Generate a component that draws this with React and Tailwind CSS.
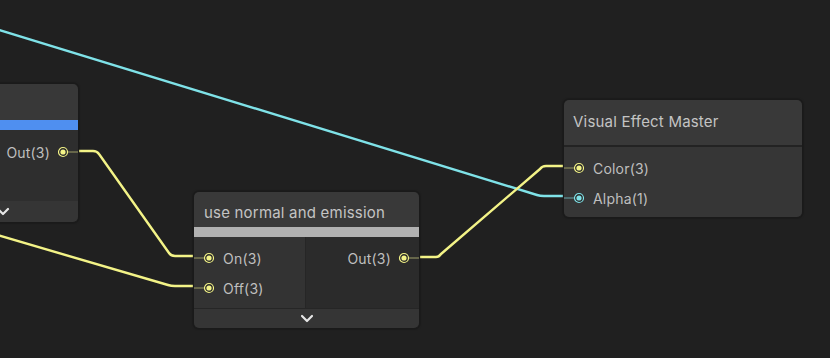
import React from "react";

const YELLOW = "#f3f387";
const CYAN = "#7fe2e8";

const Port = ({ color }) => (
  <svg width="12" height="12" viewBox="0 0 12 12" className="shrink-0">
    <circle cx="6" cy="6" r="4.5" fill="#2a2a2a" stroke={color} strokeWidth="1.2" />
    <circle cx="6" cy="6" r="2.6" fill={color} />
  </svg>
);

const Chevron = () => (
  <svg width="14" height="9" viewBox="0 0 14 9">
    <path d="M2 2 L7 7 L12 2" fill="none" stroke="#e6e6e6" strokeWidth="2.2" strokeLinecap="round" strokeLinejoin="round" />
  </svg>
);

const Edges = () => (
  <svg className="absolute left-0 top-0" width="830" height="358" viewBox="0 0 830 358">
    <g fill="none" strokeWidth="2.4" strokeLinejoin="round">
      {/* cyan alpha edge */}
      <path d="M-20 24 L537 195 Q540 196 544 196 L564 196" stroke={CYAN} />
      {/* out -> on */}
      <path d="M78 151 L93 151 Q97 151 99 154 L169 253 Q171 256 175 256 L194 256" stroke={YELLOW} />
      {/* left -> off */}
      <path d="M-20 230 L168 285 Q171 286 175 286 L194 286" stroke={YELLOW} />
      {/* out -> color */}
      <path d="M419 257 L436 257 Q439 257 441 254 L540 169 Q542 166 546 166 L564 166" stroke={YELLOW} />
    </g>
  </svg>
);

const Row = ({ label, color, side = "in" }) =>
  side === "in" ? (
    <div className="relative flex h-[30px] items-center pl-[9px]">
      <div className="absolute left-0 top-[14px] h-[2px] w-[12px]" style={{ background: color === CYAN ? "#4d6c6e" : "#66664a" }} />
      <div className="relative">
        <Port color={color} />
      </div>
      <span className="ml-[8px]">{label}</span>
    </div>
  ) : (
    <div className="relative flex h-[30px] items-center justify-end pr-[9px]">
      <div className="absolute right-0 top-[14px] h-[2px] w-[12px] bg-[#66664a]" />
      <span className="mr-[7px]">{label}</span>
      <div className="relative">
        <Port color={color} />
      </div>
    </div>
  );

export default function App() {
  return (
    <div
      className="relative h-[358px] w-[830px] overflow-hidden bg-[#202020] text-[14px] tracking-[0.2px] text-[#bfbfbf]"
      style={{ fontFamily: "Inter, 'Noto Sans', sans-serif" }}
    >
      <Edges />

      {/* left node, mostly off screen */}
      <div className="absolute left-[-73px] top-[83px] flex w-[152px] flex-col overflow-hidden rounded-[6px] border border-[#1a1a1a] shadow-[0_0_2px_rgba(0,0,0,0.6)]">
        <div className="h-[36px] bg-[#383838]" />
        <div className="h-[10px] bg-[#4f8ff0]" />
        <div className="h-[71px] bg-[#2e2e2e] pt-[7px]">
          <Row label="Out(3)" color={YELLOW} side="out" />
        </div>
        <div className="flex h-[21px] items-center justify-center bg-[#353535]">
          <Chevron />
        </div>
      </div>

      {/* middle node */}
      <div className="absolute left-[193px] top-[191px] flex w-[227px] flex-col overflow-hidden rounded-[6px] border border-[#1a1a1a] shadow-[0_0_2px_rgba(0,0,0,0.6)]">
        <div className="flex h-[35px] items-center bg-[#393939] pl-[10px] pt-[7px] text-[15px] text-[#c4c4c4]">
          use normal and emission
        </div>
        <div className="h-[10px] bg-[#b1b1b1]" />
        <div className="flex h-[71px]">
          <div className="w-[111px] bg-[#333333] pt-[6px]">
            <Row label="On(3)" color={YELLOW} />
            <Row label="Off(3)" color={YELLOW} />
          </div>
          <div className="w-px bg-[#262626]" />
          <div className="flex-1 bg-[#2b2b2b] pt-[6px]">
            <Row label="Out(3)" color={YELLOW} side="out" />
          </div>
        </div>
        <div className="flex h-[20px] items-center justify-center border-t border-[#262626] bg-[#353535]">
          <Chevron />
        </div>
      </div>

      {/* master node */}
      <div className="absolute left-[563px] top-[99px] flex w-[240px] flex-col overflow-hidden rounded-[6px] border border-[#1a1a1a] shadow-[0_0_2px_rgba(0,0,0,0.6)]">
        <div className="flex h-[45px] items-center bg-[#393939] pl-[9px] text-[15px] text-[#c4c4c4]">
          Visual Effect Master
        </div>
        <div className="h-[2px] bg-[#232323]" />
        <div className="h-[70px] bg-[#363636] pt-[6px]">
          <Row label="Color(3)" color={YELLOW} />
          <Row label="Alpha(1)" color={CYAN} />
        </div>
      </div>
    </div>
  );
}
